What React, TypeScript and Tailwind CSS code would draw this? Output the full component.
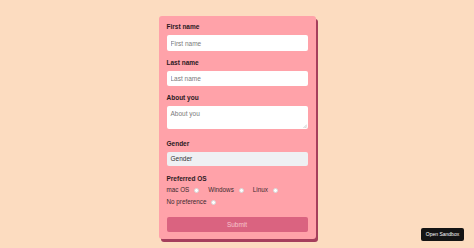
import React from 'react'

const inputBase =
  'block w-full rounded-[2px] bg-white px-[4px] text-[6.5px] text-[#222] placeholder:text-[#7a7a7a] outline-none'

function Label({ children, className = '' }: { children: React.ReactNode; className?: string }) {
  return <div className={`text-[6.5px] leading-[8px] font-bold text-[#2b1a1f] ${className}`}>{children}</div>
}

function Radio({ label }: { label: string }) {
  return (
    <label className="flex items-center text-[6.3px] leading-[8px] text-[#3b2a2e]">
      {label}
      <input
        type="radio"
        name="os"
        className="ml-[5px] h-[5px] w-[5px] appearance-none rounded-full border-[0.5px] border-[#d8d8d8] bg-white"
      />
    </label>
  )
}

export default function App() {
  return (
    <div className="relative h-[248px] w-full overflow-hidden bg-[#fcdcc0] font-['Liberation_Sans',Arial,sans-serif]">
      <div className="pt-[16px]">
        <form className="mx-auto box-border h-[223px] w-[157px] rounded-[3px] bg-[#ffa2a9] px-[8px] pt-[7px] shadow-[2px_3px_0_#a53f5c]">
          <Label>First name</Label>
          <input className={`${inputBase} mt-[4px] h-[16px]`} placeholder="First name" />

          <Label className="mt-[8px]">Last name</Label>
          <input className={`${inputBase} mt-[4px] h-[15px]`} placeholder="Last name" />

          <Label className="mt-[8px]">About you</Label>
          <div className="relative mt-[4px]">
            <textarea className={`${inputBase} h-[23px] resize-none pt-[3px]`} placeholder="About you" />
            <svg className="absolute bottom-[1px] right-[1px]" width="4" height="4" viewBox="0 0 4 4">
              <path d="M4 0.5 L0.5 4 M4 2.3 L2.3 4" stroke="#999" strokeWidth="0.5" />
            </svg>
          </div>

          <Label className="mt-[11px]">Gender</Label>
          <div className="mt-[4px] flex h-[14px] items-center rounded-[2px] bg-[#eff0f3] px-[4px] text-[6.5px] text-[#333]">
            Gender
          </div>

          <Label className="mt-[9px]">Preferred OS</Label>
          <div className="mt-[3px] flex flex-wrap gap-x-[9px] gap-y-[4px]">
            <Radio label="mac OS" />
            <Radio label="Windows" />
            <Radio label="Linux" />
            <Radio label="No preference" />
          </div>

          <button
            type="button"
            className="mt-[11px] flex h-[15px] w-full items-center justify-center rounded-[2px] bg-[#da6380] text-[6.5px] text-[#f8c3cd]"
          >
            Submit
          </button>
        </form>
      </div>

      <button
        type="button"
        className="absolute bottom-[7px] right-[10px] flex h-[13px] w-[43px] items-center justify-center rounded-[2px] bg-[#141414] text-[5px] text-white"
      >
        Open Sandbox
      </button>
    </div>
  )
}
